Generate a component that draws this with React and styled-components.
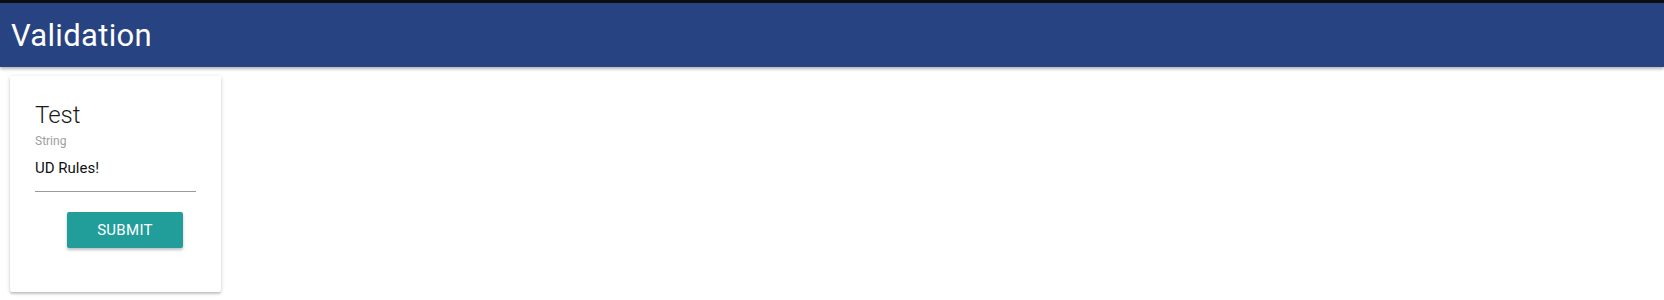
import styled, { createGlobalStyle } from 'styled-components'

const GlobalStyle = createGlobalStyle`
body {
  margin: 0;
  background: #ffffff;
  font-family: Roboto, "Liberation Sans", sans-serif;
}
`
const Page = styled.div`
width: 1664px;
height: 300px;
background: #ffffff;
`
const AppBar = styled.header`
height: 64px;
border-top: 3px solid #0e0e12;
background: #284382;
display: flex;
align-items: center;
padding-left: 11px;
box-shadow: 0 2px 3px rgba(0, 0, 0, 0.3);
`
const Title = styled.h1`
margin: 0;
font-size: 31px;
font-weight: 400;
color: #ffffff;
letter-spacing: 0.01em;
`
const Content = styled.div`
padding: 9px 0 0 10px;
`
const Card = styled.div`
width: 211px;
height: 216px;
box-sizing: border-box;
padding: 24px 25px 0 25px;
background: #ffffff;
border-radius: 2px;
box-shadow: 0 2px 2px rgba(0, 0, 0, 0.14), 0 1px 4px rgba(0, 0, 0, 0.16);
`
const FieldTitle = styled.div`
font-size: 24px;
font-weight: 300;
color: #1a1a1a;
line-height: 30px;
`
const FieldLabel = styled.div`
font-size: 12px;
color: #9e9e9e;
line-height: 14px;
margin-top: 4px;
`
const Input = styled.div`
margin-top: 10px;
font-size: 15px;
color: #111111;
line-height: 20px;
padding-bottom: 13px;
border-bottom: 1px solid #9a9a9a;
`
const Button = styled.button`
margin: 20px 0 0 32px;
width: 116px;
height: 36px;
border: none;
border-radius: 2px;
background: #229e9a;
color: #ffffff;
font-family: Roboto, "Liberation Sans", sans-serif;
font-size: 15px;
font-weight: 400;
letter-spacing: 0.02em;
box-shadow: 0 2px 3px rgba(0, 0, 0, 0.25);
cursor: pointer;
`

export default function App() {
    return (
        <Page>
            <GlobalStyle />
            <AppBar>
                <Title>Validation</Title>
            </AppBar>
            <Content>
                <Card>
                    <FieldTitle>Test</FieldTitle>
                    <FieldLabel>String</FieldLabel>
                    <Input>UD Rules!</Input>
                    <Button>SUBMIT</Button>
                </Card>
            </Content>
        </Page>
    );
}
